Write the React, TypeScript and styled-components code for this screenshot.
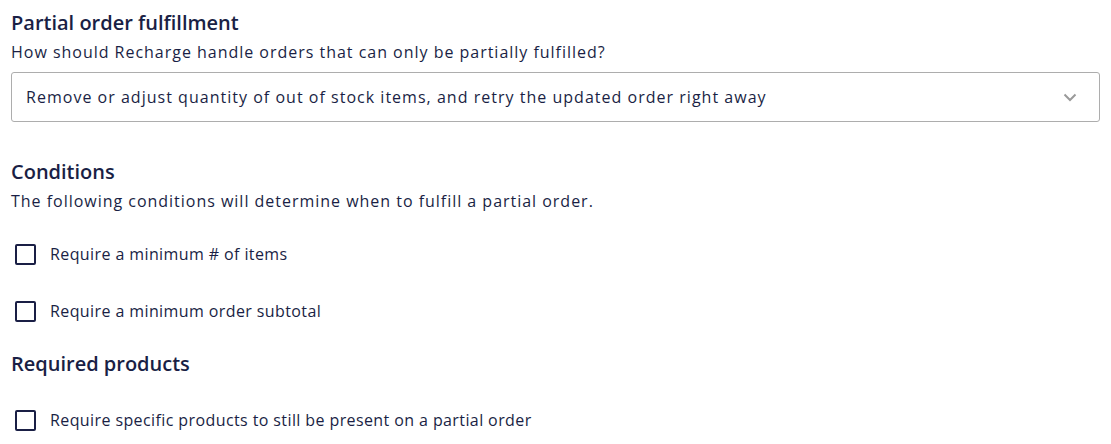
import React, { useState } from 'react';
import styled, { createGlobalStyle } from 'styled-components';

const GlobalStyle = createGlobalStyle`
  body {
    margin: 0;
    background: #fff;
    font-family: "Open Sans", "Noto Sans", sans-serif;
    color: #1a1f45;
  }
`;

const Page = styled.div`
  padding: 9px 11px 0 11px;
  width: 1089px;
`;

const Section = styled.section<{ gap?: number }>`
  margin-bottom: ${(p) => p.gap ?? 0}px;
`;

const Title = styled.h2`
  margin: 0;
  font-size: 20px;
  font-weight: 600;
  line-height: 28px;
`;

const Hint = styled.p`
  margin: 3px 0 0;
  font-size: 16px;
  line-height: 24px;
  letter-spacing: 0.98px;
`;

const SelectBox = styled.div`
  margin-top: 8px;
  height: 50px;
  box-sizing: border-box;
  border: 1px solid #adadad;
  border-radius: 3px;
  display: flex;
  align-items: center;
  justify-content: space-between;
  padding: 0 22px 0 14px;
  font-size: 16px;
  letter-spacing: 1.02px;
  cursor: pointer;
`;

const Options = styled.div<{ top: number }>`
  display: flex;
  flex-direction: column;
  gap: 35px;
  margin-top: ${(p) => p.top}px;
`;

const Option = styled.label`
  display: flex;
  align-items: center;
  gap: 14px;
  font-size: 16px;
  line-height: 22px;
  letter-spacing: 0.4px;
  cursor: pointer;
`;

const Box = styled.span<{ checked: boolean }>`
  width: 21px;
  height: 21px;
  box-sizing: border-box;
  margin-left: 4px;
  border: 2px solid #1a1f45;
  border-radius: 2px;
  background: ${(p) => (p.checked ? '#1a1f45' : '#fff')};
`;

const Check = ({ label }: { label: string }) => {
  const [on, setOn] = useState(false);
  return (
    <Option onClick={() => setOn(!on)}>
      <Box checked={on} />
      {label}
    </Option>
  );
};

const Chevron = () => (
  <svg width="14" height="9" viewBox="0 0 14 9" fill="none">
    <path d="M1.5 1.5 L7 7 L12.5 1.5" stroke="#9a9a9a" strokeWidth="2" />
  </svg>
);

export default function App() {
  return (
    <Page>
      <GlobalStyle />
      <Section gap={36}>
        <Title>Partial order fulfillment</Title>
        <Hint>How should Recharge handle orders that can only be partially fulfilled?</Hint>
        <SelectBox>
          <span>Remove or adjust quantity of out of stock items, and retry the updated order right away</span>
          <Chevron />
        </SelectBox>
      </Section>
      <Section gap={28}>
        <Title>Conditions</Title>
        <Hint>The following conditions will determine when to fulfill a partial order.</Hint>
        <Options top={30}>
          <Check label="Require a minimum # of items" />
          <Check label="Require a minimum order subtotal" />
        </Options>
      </Section>
      <Section>
        <Title>Required products</Title>
        <Options top={31}>
          <Check label="Require specific products to still be present on a partial order" />
        </Options>
      </Section>
    </Page>
  );
}
